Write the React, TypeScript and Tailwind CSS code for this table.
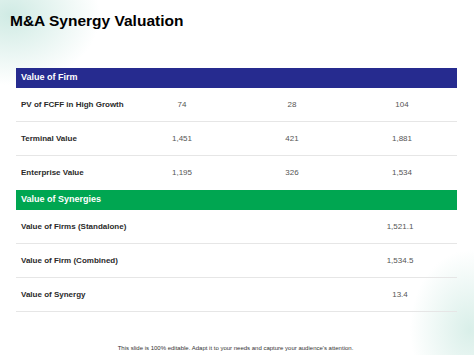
const firmRows = [
  { label: 'PV of FCFF in High Growth', values: ['74', '28', '104'] },
  { label: 'Terminal Value', values: ['1,451', '421', '1,881'] },
  { label: 'Enterprise Value', values: ['1,195', '326', '1,534'] },
]

const synergyRows = [
  { label: 'Value of Firms (Standalone)', value: '1,521.1' },
  { label: 'Value of Firm (Combined)', value: '1,534.5' },
  { label: 'Value of Synergy', value: '13.4' },
]

const App = () => {
  return (
    <div
      className="relative h-[355px] w-[474px] overflow-hidden bg-white bg-[radial-gradient(ellipse_90px_70px_at_10px_15px,rgba(150,210,195,0.45),transparent),radial-gradient(ellipse_60px_80px_at_470px_330px,rgba(160,215,200,0.4),transparent)]"
      style={{ fontFamily: '"Liberation Sans", Arial, sans-serif' }}
    >
      <h1 className="pl-[10px] pt-[12px] text-[15.5px] font-bold leading-[18px] text-black">M&amp;A Synergy Valuation</h1>

      {/* table */}
      <div className="ml-[16px] mt-[38px] w-[441px]">
        <div className="flex h-[20px] items-center bg-[#262b8f] pl-[5px] text-[9px] font-bold text-white">Value of Firm</div>
        {firmRows.map((r, i) => (
          <div
            key={r.label}
            className={`grid h-[34px] grid-cols-[111px_110px_110px_110px] items-center ${i < 2 ? 'border-b border-[#e6e6e6]' : ''}`}
          >
            <span className="pl-[5px] text-[8px] font-bold text-[#2a2a2a]">{r.label}</span>
            {r.values.map((v, j) => (
              <span key={j} className="text-center text-[8px] text-[#555]">{v}</span>
            ))}
          </div>
        ))}

        <div className="flex h-[20px] items-center bg-[#00a651] pl-[5px] text-[9px] font-bold text-white">Value of Synergies</div>
        {synergyRows.map((r) => (
          <div key={r.label} className="grid h-[34px] grid-cols-[111px_110px_110px_110px] items-center border-b border-[#e6e6e6]">
            <span className="col-span-3 pl-[5px] text-[8px] font-bold text-[#2a2a2a]">{r.label}</span>
            <span className="pr-[4px] text-center text-[8px] text-[#555]">{r.value}</span>
          </div>
        ))}
      </div>

      <p className="absolute bottom-[2px] left-0 right-[1px] pr-[2px] text-center text-[6px] text-[#333]">
        This slide is 100% editable. Adapt it to your needs and capture your audience's attention.
      </p>
    </div>
  )
}

export default App
